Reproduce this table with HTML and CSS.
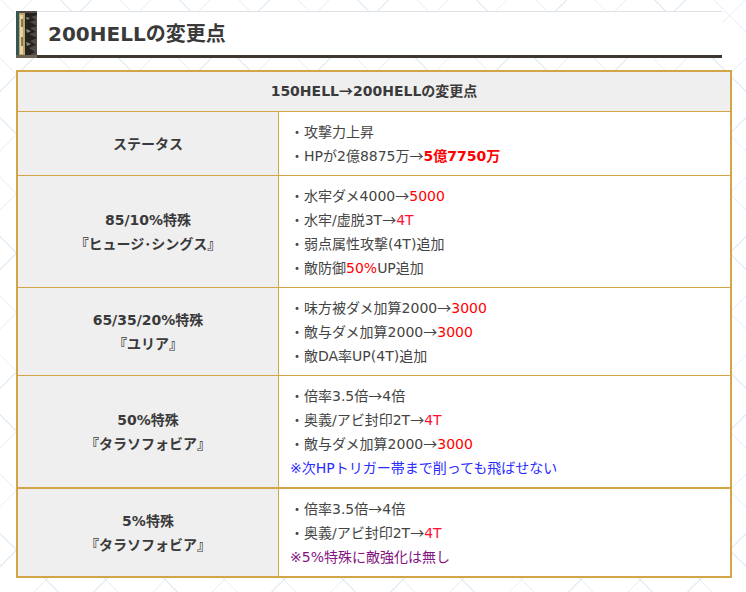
FILE: index.html
```html
<!DOCTYPE html>
<html lang="ja">
<head>
<meta charset="utf-8">
<link rel="stylesheet" href="styles.css">
</head>
<body>
<div class="page">
  <div class="heading">
    <div class="ornament">
      <svg width="21" height="47" viewBox="0 0 21 47">
        <rect x="0" y="0" width="21" height="47" fill="#4f4b45"/>
        <rect x="0" y="0" width="2" height="47" fill="#2c5a5a"/>
        <rect x="3" y="2" width="6" height="43" fill="#b9a66e"/>
        <rect x="4" y="4" width="3" height="39" fill="#e3d6a4"/>
        <rect x="5" y="8" width="2" height="8" fill="#8a7a4c"/>
        <rect x="5" y="26" width="2" height="9" fill="#8a7a4c"/>
        <path d="M9 2 L21 2 L21 4 L15 6 L20 9 L14 11 L21 15 L14 17 L20 21 L13 23 L21 27 L14 30 L20 34 L13 37 L19 41 L12 45 L9 45 Z" fill="#26221e"/>
        <path d="M10 6 L14 7 L11 9 Z M10 18 L15 20 L11 22 Z M10 31 L15 33 L11 35 Z" fill="#8e8a80"/>
        <rect x="0" y="44" width="21" height="3" fill="#6c6352"/>
      </svg>
    </div>
    <h2 class="title">200HELLの変更点</h2>
  </div>

  <table class="changes">
    <tr>
      <th class="caption" colspan="2">150HELL<span class="ar">→</span>200HELLの変更点</th>
    </tr>
    <tr>
      <th>ステータス</th>
      <td>・攻撃力上昇<br>・HPが2億8875万<span class="ar">→</span><strong class="red">5億7750万</strong></td>
    </tr>
    <tr>
      <th>85/10%特殊<br>『ヒュージ･シングス』</th>
      <td>・水牢ダメ4000<span class="ar">→</span><span class="red">5000</span><br>・水牢/虚脱3T<span class="ar">→</span><span class="red2">4T</span><br>・弱点属性攻撃(4T)追加<br>・敵防御<span class="red">50%</span>UP追加</td>
    </tr>
    <tr>
      <th>65/35/20%特殊<br>『ユリア』</th>
      <td>・味方被ダメ加算2000<span class="ar">→</span><span class="red">3000</span><br>・敵与ダメ加算2000<span class="ar">→</span><span class="red">3000</span><br>・敵DA率UP(4T)追加</td>
    </tr>
    <tr>
      <th>50%特殊<br>『タラソフォビア』</th>
      <td>・倍率3.5倍<span class="ar">→</span>4倍<br>・奥義/アビ封印2T<span class="ar">→</span><span class="red2">4T</span><br>・敵与ダメ加算2000<span class="ar">→</span><span class="red">3000</span><br><span class="blue">※次HPトリガー帯まで削っても飛ばせない</span></td>
    </tr>
    <tr class="last">
      <th>5%特殊<br>『タラソフォビア』</th>
      <td>・倍率3.5倍<span class="ar">→</span>4倍<br>・奥義/アビ封印2T<span class="ar">→</span><span class="red2">4T</span><br><span class="purple">※5%特殊に敵強化は無し</span></td>
    </tr>
  </table>
</div>
</body>
</html>
```

FILE: styles.css
```css
html, body {
  margin: 0;
  padding: 0;
}
body {
  width: 746px;
  height: 592px;
  overflow: hidden;
  font-family: "DejaVu Sans", "Noto Sans CJK JP", sans-serif;
  color: #3a3a3a;
  background-color: #ffffff;
  background-image:
    repeating-linear-gradient(45deg, transparent 0, transparent 41px, rgba(190, 212, 230, 0.4) 41px, rgba(190, 212, 230, 0.4) 42px),
    repeating-linear-gradient(-45deg, transparent 0, transparent 41px, rgba(190, 212, 230, 0.4) 41px, rgba(190, 212, 230, 0.4) 42px);
}
.page {
  padding: 11px 14px 0 16px;
}
.heading {
  display: flex;
  width: 706px;
  height: 47px;
  background: #ffffff;
}
.ornament {
  width: 21px;
  height: 47px;
  flex: none;
}
.ornament svg {
  display: block;
}
.title {
  flex: 1;
  margin: 0;
  box-sizing: border-box;
  height: 47px;
  border-top: 1px solid #dce2e7;
  border-bottom: 3px solid #3d3730;
  padding: 6px 0 0 11px;
  font-size: 20px;
  font-weight: bold;
  line-height: 32px;
  color: #3a3a3a;
}
.changes {
  margin-top: 12px;
  width: 716px;
  border-collapse: collapse;
  border: 2px solid #d2a546;
  font-size: 14px;
  line-height: 24px;
  background: #ffffff;
}
.changes th,
.changes td {
  border: 1px solid #d2a546;
  padding: 8px 12px 7px;
}
.changes th {
  background: #efefef;
  font-weight: bold;
  text-align: center;
  vertical-align: middle;
  width: 236px;
  color: #3a3a3a;
}
.changes th.caption {
  width: auto;
  padding: 7px 12px 8px;
}
.changes td {
  text-align: left;
  vertical-align: top;
  color: #444444;
  padding-left: 11px;
}
.changes tr.last th,
.changes tr.last td {
  border-top: 2px solid #d2a546;
}
.ar {
  font-family: "Noto Sans CJK JP", sans-serif;
  line-height: 1;
}
.red {
  color: #ff0000;
}
strong.red {
  font-weight: bold;
}
.red2 {
  color: #ff1033;
}
.blue {
  color: #2b2bff;
}
.purple {
  color: #83137f;
}
```
